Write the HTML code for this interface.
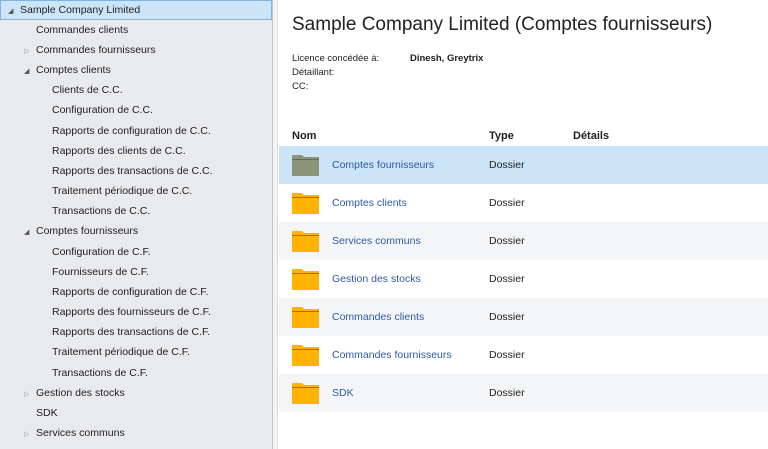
<!DOCTYPE html>
<html><head><style>
*{margin:0;padding:0;box-sizing:border-box}
body{width:768px;height:449px;overflow:hidden;background:#fff;font-family:"Liberation Sans",sans-serif;font-size:10.5px;color:#1e1e1e;position:relative}
#side{position:absolute;left:0;top:0;width:273px;height:449px;background:#e9eaed;border-right:1px solid #c4c4c4}
#gap{position:absolute;left:273px;top:0;width:5px;height:449px;background:#f3f3f3;border-right:1px solid #dcdcdc}
.it{position:absolute;height:20px;line-height:21px;white-space:nowrap}
.sel{left:0;width:272px;top:0;height:20px;background:#cce4f7;border:1px solid #7fb4e0}
.ar{position:absolute;font-size:7px;color:#555}
#main{position:absolute;left:279px;top:0;right:0;bottom:0}
h1{position:absolute;left:13px;top:14px;font-weight:normal;font-size:19px;color:#222}
.lbl{position:absolute;left:13px;font-size:9.5px}
.row{position:absolute;left:0;right:0;height:38px}
.g{background:#f4f5f7}
.row .n{position:absolute;left:53px;top:13px;color:#2d5aa6;font-size:10.5px}
.row .t{position:absolute;left:210px;top:13px;font-size:10.5px}
.f{position:absolute;left:13px;top:8px;width:27px;height:22px}
.hd{position:absolute;top:130px;font-weight:bold;font-size:11px}
</style></head><body>
<div id="side">
<div class="it sel"></div>
<div class="ar" style="left:8px;top:7px">◢</div><div class="it" style="left:20px;top:0">Sample Company Limited</div>
<div class="it" style="left:36px;top:20px">Commandes clients</div>
<div class="ar" style="left:24px;top:47px;color:#999">▷</div><div class="it" style="left:36px;top:40px">Commandes fournisseurs</div>
<div class="ar" style="left:24px;top:67px">◢</div><div class="it" style="left:36px;top:60px">Comptes clients</div>
<div class="it" style="left:52px;top:80px">Clients de C.C.</div>
<div class="it" style="left:52px;top:100px">Configuration de C.C.</div>
<div class="it" style="left:52px;top:121px">Rapports de configuration de C.C.</div>
<div class="it" style="left:52px;top:141px">Rapports des clients de C.C.</div>
<div class="it" style="left:52px;top:161px">Rapports des transactions de C.C.</div>
<div class="it" style="left:52px;top:181px">Traitement périodique de C.C.</div>
<div class="it" style="left:52px;top:201px">Transactions de C.C.</div>
<div class="ar" style="left:24px;top:228px">◢</div><div class="it" style="left:36px;top:221px">Comptes fournisseurs</div>
<div class="it" style="left:52px;top:242px">Configuration de C.F.</div>
<div class="it" style="left:52px;top:262px">Fournisseurs de C.F.</div>
<div class="it" style="left:52px;top:282px">Rapports de configuration de C.F.</div>
<div class="it" style="left:52px;top:302px">Rapports des fournisseurs de C.F.</div>
<div class="it" style="left:52px;top:322px">Rapports des transactions de C.F.</div>
<div class="it" style="left:52px;top:342px">Traitement périodique de C.F.</div>
<div class="it" style="left:52px;top:363px">Transactions de C.F.</div>
<div class="ar" style="left:24px;top:390px;color:#999">▷</div><div class="it" style="left:36px;top:383px">Gestion des stocks</div>
<div class="it" style="left:36px;top:403px">SDK</div>
<div class="ar" style="left:24px;top:430px;color:#999">▷</div><div class="it" style="left:36px;top:423px">Services communs</div>
</div>
<div id="gap"></div>
<div id="main">
<h1>Sample Company Limited (Comptes fournisseurs)</h1>
<div class="lbl" style="top:53px">Licence concédée à:</div><div class="lbl" style="left:131px;top:53px;font-weight:bold">Dinesh, Greytrix</div>
<div class="lbl" style="top:67px">Détaillant:</div>
<div class="lbl" style="top:81px">CC:</div>
<div class="hd" style="left:13px">Nom</div><div class="hd" style="left:210px">Type</div><div class="hd" style="left:294px">Détails</div>
<div class="row" style="top:146px;background:#cce4f7"><svg class="f" viewBox="0 0 27 22"><path d="M0 1h10l2 2h15v19H0z" fill="#8c9478"/><rect x="0" y="5" width="27" height="1" fill="#667"/></svg><span class="n">Comptes fournisseurs</span><span class="t">Dossier</span></div>
<div class="row" style="top:184px"><svg class="f" viewBox="0 0 27 22"><path d="M0 1h10l2 2h15v19H0z" fill="#fdb300"/><rect x="0" y="5" width="27" height="1" fill="#a86e00"/></svg><span class="n">Comptes clients</span><span class="t">Dossier</span></div>
<div class="row g" style="top:222px"><svg class="f" viewBox="0 0 27 22"><path d="M0 1h10l2 2h15v19H0z" fill="#fdb300"/><rect x="0" y="5" width="27" height="1" fill="#a86e00"/></svg><span class="n">Services communs</span><span class="t">Dossier</span></div>
<div class="row" style="top:260px"><svg class="f" viewBox="0 0 27 22"><path d="M0 1h10l2 2h15v19H0z" fill="#fdb300"/><rect x="0" y="5" width="27" height="1" fill="#a86e00"/></svg><span class="n">Gestion des stocks</span><span class="t">Dossier</span></div>
<div class="row g" style="top:298px"><svg class="f" viewBox="0 0 27 22"><path d="M0 1h10l2 2h15v19H0z" fill="#fdb300"/><rect x="0" y="5" width="27" height="1" fill="#a86e00"/></svg><span class="n">Commandes clients</span><span class="t">Dossier</span></div>
<div class="row" style="top:336px"><svg class="f" viewBox="0 0 27 22"><path d="M0 1h10l2 2h15v19H0z" fill="#fdb300"/><rect x="0" y="5" width="27" height="1" fill="#a86e00"/></svg><span class="n">Commandes fournisseurs</span><span class="t">Dossier</span></div>
<div class="row g" style="top:374px"><svg class="f" viewBox="0 0 27 22"><path d="M0 1h10l2 2h15v19H0z" fill="#fdb300"/><rect x="0" y="5" width="27" height="1" fill="#a86e00"/></svg><span class="n">SDK</span><span class="t">Dossier</span></div>
</div>
</body></html>
